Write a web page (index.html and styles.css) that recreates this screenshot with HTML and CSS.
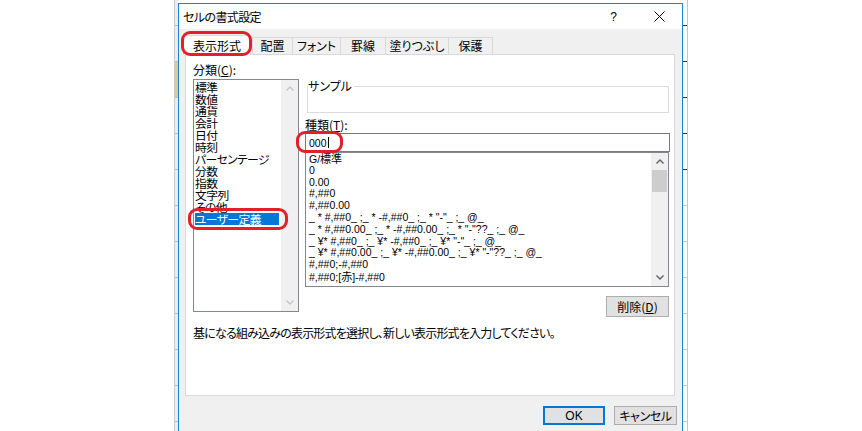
FILE: index.html
```html
<!DOCTYPE html>
<html lang="ja">
<head>
<meta charset="utf-8">
<title>セルの書式設定</title>
<link rel="stylesheet" href="styles.css">
</head>
<body>
<div class="screen">
  <div class="pad-left"></div>
  <div class="xl-left"></div>
  <div class="dialog">
    <div class="titlebar">
      <div class="title">セルの書式設定</div>
      <div class="tbtn help">?</div>
      <div class="tbtn close">
        <svg width="11" height="11" viewBox="0 0 11 11"><path d="M0.5 0.5 L10.5 10.5 M10.5 0.5 L0.5 10.5" stroke="#000" stroke-width="1" fill="none"/></svg>
      </div>
    </div>
    <div class="tabs">
      <div class="tab sel">表示形式</div>
      <div class="tab t-haichi">配置</div>
      <div class="tab t-font">フォント</div>
      <div class="tab t-kei">罫線</div>
      <div class="tab t-nuri">塗りつぶし</div>
      <div class="tab t-hogo">保護</div>
    </div>
    <div class="panel">
      <div class="main">
        <div class="leftcol">
          <div class="label cat-label">分類(<u>C</u>):</div>
          <div class="catlist">
            <div class="catitems">
              <div class="cat">標準</div>
              <div class="cat">数値</div>
              <div class="cat">通貨</div>
              <div class="cat">会計</div>
              <div class="cat">日付</div>
              <div class="cat">時刻</div>
              <div class="cat">パーセンテージ</div>
              <div class="cat">分数</div>
              <div class="cat">指数</div>
              <div class="cat">文字列</div>
              <div class="cat">その他</div>
              <div class="cat sel">ユーザー定義</div>
            </div>
            <div class="vscroll">
              <div class="sbtn"><svg width="8" height="5" viewBox="0 0 8 5"><polyline points="0.5,4.5 4,1 7.5,4.5" fill="none" stroke="#c5c5c5" stroke-width="1.4"/></svg></div>
              <div class="strack"></div>
              <div class="sbtn"><svg width="8" height="5" viewBox="0 0 8 5"><polyline points="0.5,0.5 4,4 7.5,0.5" fill="none" stroke="#c5c5c5" stroke-width="1.4"/></svg></div>
            </div>
          </div>
        </div>
        <div class="rightcol">
          <fieldset class="sample">
            <legend>サンプル</legend>
            <div class="sample-body"></div>
          </fieldset>
          <div class="label type-label">種類(<u>T</u>):</div>
          <div class="textbox">000<span class="caret"></span></div>
          <div class="fmtlist">
            <div class="fmtitems">
              <div class="fmt">G/<span class="k">標準</span></div>
              <div class="fmt">0</div>
              <div class="fmt">0.00</div>
              <div class="fmt">#,##0</div>
              <div class="fmt">#,##0.00</div>
              <div class="fmt">_ * #,##0_ ;_ * -#,##0_ ;_ * "-"_ ;_ @_ </div>
              <div class="fmt">_ * #,##0.00_ ;_ * -#,##0.00_ ;_ * "-"??_ ;_ @_ </div>
              <div class="fmt">_ ¥* #,##0_ ;_ ¥* -#,##0_ ;_ ¥* "-"_ ;_ @_ </div>
              <div class="fmt">_ ¥* #,##0.00_ ;_ ¥* -#,##0.00_ ;_ ¥* "-"??_ ;_ @_ </div>
              <div class="fmt">#,##0;-#,##0</div>
              <div class="fmt">#,##0;[<span class="k">赤</span>]-#,##0</div>
            </div>
            <div class="vscroll">
              <div class="sbtn"><svg width="8" height="5" viewBox="0 0 8 5"><polyline points="0.5,4.5 4,1 7.5,4.5" fill="none" stroke="#606060" stroke-width="1.4"/></svg></div>
              <div class="strack"><div class="thumb"></div></div>
              <div class="sbtn"><svg width="8" height="5" viewBox="0 0 8 5"><polyline points="0.5,0.5 4,4 7.5,0.5" fill="none" stroke="#606060" stroke-width="1.4"/></svg></div>
            </div>
          </div>
          <div class="btn delbtn">削除(<u>D</u>)</div>
        </div>
      </div>
      <div class="desc">基になる組み込みの表示形式を選択し、新しい表示形式を入力してください。</div>
    </div>
    <div class="footer">
      <div class="btn ok">OK</div>
      <div class="btn cancel">キャンセル</div>
    </div>
  </div>
  <div class="xl-right"></div>

  <div class="mark mark-tab"></div>
  <div class="mark mark-input"></div>
  <div class="mark mark-item"></div>
</div>
</body>
</html>
```

FILE: styles.css
```css
* { box-sizing: border-box; }

html, body {
  margin: 0;
  padding: 0;
}

body {
  background: #ffffff;
  color: #000000;
  font-family: "Noto Sans CJK JP", "Noto Sans", sans-serif;
  font-size: 12px;
  font-feature-settings: "palt";
}

.screen {
  position: relative;
  display: flex;
  width: 862px;
  height: 431px;
  overflow: hidden;
}

.pad-left { width: 174px; flex: none; }

.xl-left {
  width: 4px;
  flex: none;
  border-left: 1px solid #cacaca;
  background:
    linear-gradient(#dfcc8c, #dfcc8c) 0 62px / 100% 35px no-repeat,
    linear-gradient(to bottom, transparent 35px, #bdbdbd 35px) 0 -10px / 100% 36px repeat-y,
    #ececec;
}

.xl-right {
  width: 5px;
  flex: none;
  border-right: 1px solid #c4c4c4;
  background:
    linear-gradient(to bottom, transparent 25px, #333 25px 26px, transparent 26px 61px, #333 61px 62px, transparent 62px 97px, #333 97px 98px, transparent 98px 133px, #333 133px 134px, transparent 134px 169px, #333 169px 170px, transparent 170px) 0 0 / 100% 100% no-repeat,
    linear-gradient(to bottom, transparent 35px, #c8c8c8 35px) 0 -10px / 100% 36px repeat-y,
    #ffffff;
}

.dialog {
  width: 505px;
  height: 440px;
  flex: none;
  margin-top: 3px;
  border: 1px solid #1883d7;
  border-bottom: none;
  background: #f0f0f0;
  display: flex;
  flex-direction: column;
}

.titlebar {
  height: 25px;
  flex: none;
  background: #ffffff;
  display: flex;
  align-items: center;
  padding-left: 4px;
}

.title {
  flex: 1;
  line-height: 12px;
  font-size: 12px;
  letter-spacing: -0.6px;
}

.tbtn {
  width: 46px;
  height: 25px;
  display: flex;
  align-items: center;
  justify-content: center;
}

.help {
  font-family: "Liberation Sans", sans-serif;
  font-size: 12px;
  padding-left: 1px;
}

.tabs {
  position: relative;
  z-index: 1;
  flex: none;
  height: 19px;
  margin-top: 6px;
  padding-left: 4px;
  display: flex;
  align-items: flex-end;
}

.tab {
  height: 17px;
  border: 1px solid #d9d9d9;
  border-bottom: none;
  border-right: none;
  background: #f0f0f0;
  display: flex;
  align-items: center;
  justify-content: center;
  line-height: 12px;
  white-space: nowrap;
}

.tab.sel {
  width: 68px;
  height: 20px;
  margin-bottom: -1px;
  background: #ffffff;
  border-right: 1px solid #d9d9d9;
}

.t-haichi { width: 40px; margin-left: 1px; }
.t-font { width: 48px; }
.t-kei { width: 45px; }
.t-nuri { width: 63px; }
.t-hogo { width: 45px; border-right: 1px solid #d9d9d9; }

.panel {
  flex: none;
  margin-left: 6px;
  width: 490px;
  height: 342px;
  border: 1px solid #d9d9d9;
  background: #ffffff;
  padding: 9px 0 0 7px;
}

.main {
  display: flex;
  align-items: flex-start;
}

.label {
  height: 12px;
  line-height: 12px;
  white-space: nowrap;
}

.cat-label { margin-bottom: 3px; }

.leftcol {
  width: 106px;
  flex: none;
}

.catlist {
  height: 233px;
  border: 1px solid #828790;
  background: #ffffff;
  display: flex;
}

.catitems {
  flex: 1;
  padding-top: 1px;
  overflow: hidden;
}

.cat {
  height: 12px;
  line-height: 12px;
  font-size: 11.8px;
  margin: 0 2px 0 1px;
  white-space: nowrap;
  letter-spacing: -0.6px;
}

.cat.sel {
  background: #0078d7;
  color: #ffffff;
}

.vscroll {
  width: 17px;
  flex: none;
  background: #f0f0f0;
  display: flex;
  flex-direction: column;
}

.sbtn {
  height: 17px;
  flex: none;
  display: flex;
  align-items: center;
  justify-content: center;
}

.sbtn svg { display: block; }

.strack { flex: 1; }

.thumb {
  margin: 0 1px;
  height: 22px;
  background: #cdcdcd;
}

.rightcol {
  width: 365px;
  flex: none;
  margin-left: 6px;
  display: flex;
  flex-direction: column;
}

.sample {
  margin: 16px 0 0 2px;
  width: 362px;
  min-width: 0;
  padding: 0;
  border: 1px solid #dcdcdc;
}

.sample legend {
  margin: 0;
  padding: 0 2px 0 0;
  line-height: 12px;
}

.sample-body { height: 20px; }

.type-label { margin-top: 6px; }

.textbox {
  margin-top: 2px;
  height: 19px;
  border: 1px solid #7a7a7a;
  background: #ffffff;
  padding-left: 3px;
  display: flex;
  align-items: center;
  font-family: "Liberation Sans", sans-serif;
  font-size: 10.5px;
  font-feature-settings: normal;
}

.caret {
  display: inline-block;
  width: 1px;
  height: 11px;
  margin-left: 1px;
  background: #000000;
}

.fmtlist {
  width: 364px;
  height: 135px;
  border: 1px solid #828790;
  background: #ffffff;
  display: flex;
}

.fmtitems {
  flex: 1;
  padding-left: 3px;
  overflow: hidden;
  font-family: "Liberation Sans", "Noto Sans CJK JP", sans-serif;
  font-size: 10.5px;
  font-feature-settings: normal;
}

.fmt {
  height: 11.8px;
  line-height: 11.8px;
  white-space: pre;
}

.k {
  font-family: "Noto Sans CJK JP", sans-serif;
  font-size: 11px;
  line-height: 11px;
}

.btn {
  border: 1px solid #adadad;
  background: #e1e1e1;
  display: flex;
  align-items: center;
  justify-content: center;
  line-height: 12px;
  white-space: nowrap;
}

.delbtn {
  align-self: flex-end;
  margin: 9px 1px 0 0;
  width: 63px;
  height: 21px;
}

.desc {
  margin-top: 10px;
  line-height: 12px;
  white-space: nowrap;
  letter-spacing: -0.8px;
}

.footer {
  flex: none;
  display: flex;
  justify-content: flex-end;
  gap: 9px;
  margin: 10px 5px 0 0;
}

.ok {
  width: 62px;
  height: 19px;
  border: 2px solid #0078d7;
  font-family: "Liberation Sans", sans-serif;
  font-feature-settings: normal;
}

.cancel {
  width: 63px;
  height: 19px;
  letter-spacing: -0.4px;
}

/* red annotation marks drawn over the screenshot */
.mark {
  position: absolute;
  z-index: 5;
  border: 3px solid #e3202a;
  border-radius: 9px;
  pointer-events: none;
}

.mark-tab { left: 181px; top: 31px; width: 71px; height: 25px; }
.mark-input { left: 296px; top: 131px; width: 47px; height: 22px; }
.mark-item { left: 188px; top: 208px; width: 100px; height: 22px; }
```
